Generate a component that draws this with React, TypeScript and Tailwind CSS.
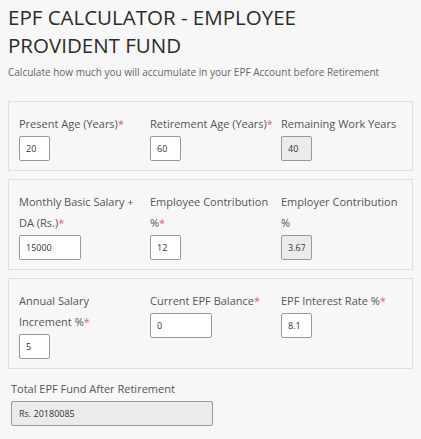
import { useState } from "react";

type Field = {
  label: string;
  required?: boolean;
  value: string;
  width: string;
  readOnly?: boolean;
};

const rows: Field[][] = [
  [
    { label: "Present Age (Years)", required: true, value: "20", width: "w-[31px]" },
    { label: "Retirement Age (Years)", required: true, value: "60", width: "w-[31px]" },
    { label: "Remaining Work Years", value: "40", width: "w-[31px]", readOnly: true },
  ],
  [
    { label: "Monthly Basic Salary + DA (Rs.)", required: true, value: "15000", width: "w-[62px]" },
    { label: "Employee Contribution %", required: true, value: "12", width: "w-[31px]" },
    { label: "Employer Contribution %", value: "3.67", width: "w-[31px]", readOnly: true },
  ],
  [
    { label: "Annual Salary Increment %", required: true, value: "5", width: "w-[31px]" },
    { label: "Current EPF Balance", required: true, value: "0", width: "w-[62px]" },
    { label: "EPF Interest Rate %", required: true, value: "8.1", width: "w-[31px]" },
  ],
];

function FieldBox({ field }: { field: Field }) {
  const [value, setValue] = useState(field.value);
  return (
    <div className="flex flex-col items-start pr-2">
      <label
        className={`text-[11px] leading-[21px] text-[#555] ${
          field.required ? "after:text-[#e0626b] after:content-['*']" : ""
        }`}
      >
        {field.label}
      </label>
      <input
        value={value}
        readOnly={field.readOnly}
        onChange={(e) => setValue(e.target.value)}
        className={`${field.width} mt-[2px] h-[25px] rounded-[2px] border border-[#999] px-[6px] text-[9px] text-[#333] outline-none ${
          field.readOnly ? "bg-[#ebebeb]" : "bg-white"
        }`}
      />
    </div>
  );
}

export default function App() {
  return (
    <div className="min-h-screen bg-[#f7f7f7] px-2 pt-[3px] font-['Open_Sans',sans-serif]">
      <h1 className="max-w-[340px] text-[20.5px] leading-[28px] text-[#2b2b2b]">
        EPF CALCULATOR - EMPLOYEE PROVIDENT FUND
      </h1>
      <p className="mt-[6px] text-[10px] leading-[14px] text-[#666]">
        Calculate how much you will accumulate in your EPF Account before Retirement
      </p>

      <div className="mt-[22px] flex flex-col gap-[8px]">
        {rows.map((row, i) => (
          <div
            key={i}
            className="grid grid-cols-[131px_131px_131px] items-start border border-[#e0e0e0] pl-[10px] pt-[11px] pb-[9px]"
          >
            {row.map((f) => (
              <FieldBox key={f.label} field={f} />
            ))}
          </div>
        ))}
      </div>

      <div className="mt-[9px] px-[3px]">
        <div className="text-[11px] leading-[21px] text-[#555]">Total EPF Fund After Retirement</div>
        <input
          value="Rs. 20180085"
          readOnly
          className="mt-[2px] h-[25px] w-[202px] rounded-[2px] border border-[#999] bg-[#ebebeb] px-[7px] text-[9px] text-[#333] outline-none"
        />
      </div>
    </div>
  );
}
